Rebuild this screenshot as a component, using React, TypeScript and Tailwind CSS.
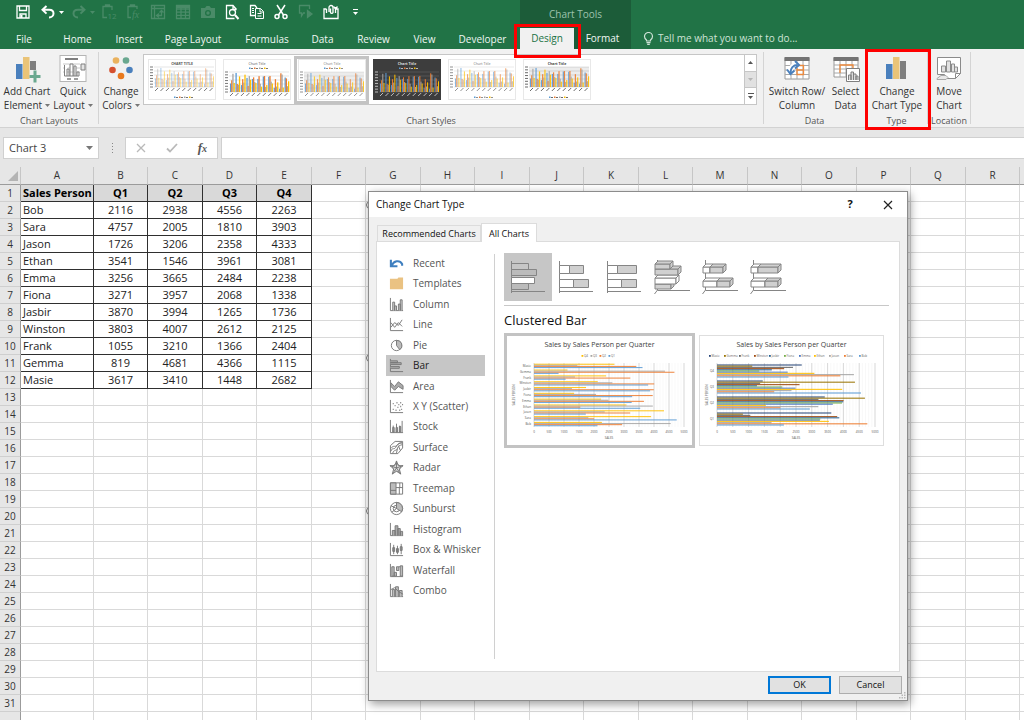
import React from "react";
import clsx from "clsx";

const PEOPLE: [string, number, number, number, number][] = [
  ["Bob", 2116, 2938, 4556, 2263],
  ["Sara", 4757, 2005, 1810, 3903],
  ["Jason", 1726, 3206, 2358, 4333],
  ["Ethan", 3541, 1546, 3961, 3081],
  ["Emma", 3256, 3665, 2484, 2238],
  ["Fiona", 3271, 3957, 2068, 1338],
  ["Jasbir", 3870, 3994, 1265, 1736],
  ["Winston", 3803, 4007, 2612, 2125],
  ["Frank", 1055, 3210, 1366, 2404],
  ["Gemma", 819, 4681, 4366, 1115],
  ["Masie", 3617, 3410, 1448, 2682],
];
const QUARTERS = ["Q1", "Q2", "Q3", "Q4"];
const QUARTER_COLORS = ["#5b9bd5", "#ed7d31", "#a5a5a5", "#ffc000"];
const PERSON_COLORS = [
  "#5b9bd5", "#ed7d31", "#a5a5a5", "#ffc000", "#4472c4", "#70ad47",
  "#255e91", "#9e480e", "#636363", "#997300", "#264478",
];
const COLUMNS = [..."ABCDEFGHIJKLMNOPQR".split(""), ""];
const ROW_COUNT = 31;
const UI = "font-['Open_Sans','Noto_Sans',sans-serif]";

/* ---------- quick access toolbar icons ---------- */

function QatIcon({ name }: { name: string }) {
  const common = { width: 16, height: 16, viewBox: "0 0 16 16", fill: "none", stroke: "currentColor", strokeWidth: 1.3 };
  switch (name) {
    case "Save":
      return (
        <svg {...common}>
          <path d="M2 2h12v12H2z" />
          <path d="M4.5 2v4.5h7V2M5 14v-4h6v4" />
          <path d="M6.5 11v3" strokeWidth="2" />
        </svg>
      );
    case "Undo":
      return (
        <svg {...common} strokeWidth={2}>
          <path d="M6.5 2 2.5 5.8l4 3.8M3 5.8h6.2c2.600 0 4.300 1.600 4.300 3.700S11.500 13.500 9 13.500" />
        </svg>
      );
    case "Redo":
      return (
        <svg {...common} strokeWidth={2}>
          <path d="m9.500 2 4 3.800-4 3.800M13 5.800H6.800c-2.600 0-4.300 1.600-4.300 3.700s2 4 4.500 4" />
        </svg>
      );
    case "Paste Values":
      return (
        <svg {...common}>
          <path d="M6 13.500H2v-11h9V6M4.500 2.500V1h4v1.500" />
          <text x="6.500" y="15" fontSize="8" stroke="none" fill="currentColor" fontFamily="Open Sans">12</text>
        </svg>
      );
    case "Paste Formulas":
      return (
        <svg {...common}>
          <path d="M5 13.500H2v-11h9V5M4.500 2.500V1h4v1.500" />
          <text x="6" y="14" fontSize="10" fontStyle="italic" stroke="none" fill="currentColor" fontFamily="Liberation Serif">fx</text>
        </svg>
      );
    case "Transpose":
      return (
        <svg {...common}>
          <path d="M1.500 1.500h13v13h-13zM1.500 4.500h13M4.500 1.500v13" />
          <path d="M7 11.500h4.500V7M9 9.500l-2.500 2 2.500 2M9.500 8.500l2-2 2 2" />
        </svg>
      );
    case "Table":
      return (
        <svg {...common}>
          <path d="M1.500 1.500h13v13h-13zM1.500 5h13M1.500 8.200h13M1.500 11.400h13M6 1.500v13M10.500 1.500v13" />
          <path d="M1.500 3h13" strokeWidth="2" />
        </svg>
      );
    case "Camera":
      return (
        <svg {...common}>
          <path d="M1 4h4l1.500-2h3L11 4h4v10H1zM8 6a3 3 0 1 0 0 6 3 3 0 0 0 0-6z" fill="currentColor" fillRule="evenodd" stroke="none" />
          <circle cx="8" cy="9" r="1.700" fill="currentColor" stroke="none" />
        </svg>
      );
    case "Print Preview":
      return (
        <svg {...common}>
          <path d="M12.500 5.500 9 1.500H2.500v13h8M9 1.500v4h3.500" />
          <circle cx="8.500" cy="8.500" r="3" />
          <path d="m11 11 3.500 4" strokeWidth="2" />
        </svg>
      );
    case "Copy":
      return (
        <svg {...common}>
          <path d="M6 11.500H1.500v-10H6L8 4" />
          <path d="M6.500 4.500h5l3 3v7h-8zM11 4.500v3.500h3.500M8.500 9.500h4M8.500 12h4M3 4.500h2M3 6.500h2M3 8.500h2" strokeWidth="1" />
        </svg>
      );
    case "Cut":
      return (
        <svg {...common} strokeWidth={1.500}>
          <path d="M4 1 10.500 11M12 1 5.500 11" />
          <circle cx="4" cy="12.500" r="2" />
          <circle cx="12" cy="12.500" r="2" />
        </svg>
      );
    case "Comment":
      return (
        <svg {...common}>
          <path d="M7 9H5.500L3.500 12V9H1.500V1.500h10V5" />
          <path d="M9.500 6.500v7l4.500-3.500z" fill="currentColor" />
        </svg>
      );
    default:
      return (
        <svg {...common}>
          <path d="M3.500 5H1v9.500h14V5h-2.500M3.500 5v4M12.500 3v6M10.500 2.500l2 2.500 2-2.500" />
          <path d="M6 8V3.500a2 2 0 0 1 4 0v5a1.300 1.300 0 0 1-2.500 0V4.500" />
        </svg>
      );
  }
}

function Caret({ className }: { className?: string }) {
  return (
    <svg width="5" height="3" viewBox="0 0 5 3" className={clsx("inline-block shrink-0", className)}>
      <path d="M0 0h5L2.500 3z" fill="currentColor" />
    </svg>
  );
}

function QatButton({ name, dim, wide }: { name: string; dim?: boolean; wide?: boolean }) {
  return (
    <button
      aria-label={name}
      className={clsx("flex h-6 items-center justify-center", wide ? "w-4" : "min-w-0 flex-1", dim ? "text-[#4a8b68]" : "text-white")}
    >
      <QatIcon name={name} />
    </button>
  );
}

const TABS: [string, string][] = [
  ["File", "w-12"],
  ["Home", "w-[59px]"],
  ["Insert", "w-[44px]"],
  ["Page Layout", "w-[84px]"],
  ["Formulas", "w-[64px]"],
  ["Data", "w-[47px]"],
  ["Review", "w-[55px]"],
  ["View", "w-[47px]"],
  ["Developer", "w-[69px]"],
];

function Header() {
  return (
    <header className="flex h-[49px] shrink-0 bg-[#217346] text-[10px] text-[#f0f7f3]">
      <div className="flex w-[520px] shrink-0 flex-col justify-between">
        <div className="flex h-6 items-center pl-[15px]">
          <QatButton name="Save" wide />
          <span className="w-[9px]" />
          <QatButton name="Undo" wide />
          <Caret className="ml-[3px] text-white" />
          <span className="w-[7px]" />
          <QatButton name="Redo" dim wide />
          <Caret className="ml-[3px] text-[#4a8b68]" />
          <div className="ml-[2px] flex w-[246px]">
            <QatButton name="Paste Values" dim />
            <QatButton name="Paste Formulas" dim />
            <QatButton name="Transpose" dim />
            <QatButton name="Table" dim />
            <QatButton name="Camera" dim />
            <QatButton name="Print Preview" />
            <QatButton name="Copy" />
            <QatButton name="Cut" />
            <QatButton name="Comment" dim />
            <QatButton name="Attach" />
          </div>
          <button aria-label="Customize toolbar" className="ml-[10px] flex flex-col items-center gap-[2px] text-white">
            <span className="h-px w-[5px] bg-white" />
            <Caret />
          </button>
        </div>
        <nav className="flex h-[22px]">
          {TABS.map(([label, w]) => (
            <button key={label} className={clsx("shrink-0 whitespace-nowrap text-center leading-6", w)}>
              {label}
            </button>
          ))}
        </nav>
      </div>
      <div className="flex w-[111px] shrink-0 flex-col justify-between bg-[#1c5c39]">
        <div className="pt-[6px] text-center leading-4 text-[#9dc3ae]">Chart Tools</div>
        <div className="flex h-[21px]">
          <div className="relative w-[54px]">
            <button className="h-full w-full bg-[#f1f1f1] leading-[21px] text-[#217346]">Design</button>
            <span className="pointer-events-none absolute -left-[6px] -top-[4px] z-10 h-[34px] w-[67px] border-[3px] border-[#fe0000]" />
          </div>
          <button className="flex-1 leading-[21px] text-[#f0f7f3]">Format</button>
        </div>
      </div>
      <div className="flex flex-1 items-end pl-[12px]">
        <button className="flex h-[21px] items-center gap-[4px] text-[#cfe3d7]">
          <svg width="11" height="13" viewBox="0 0 11 13" fill="none" stroke="currentColor" strokeWidth="1.200">
            <path d="M3.500 9V8C2.300 7 1.500 6 1.500 4.500a4 4 0 0 1 8 0C9.500 6 8.700 7 7.500 8v1zM3.500 10.700h4M4.200 12.400h2.600" />
          </svg>
          Tell me what you want to do...
        </button>
      </div>
    </header>
  );
}

/* ---------- ribbon ---------- */

function BarsIcon({ plus }: { plus?: boolean }) {
  return (
    <svg width="28" height="28" viewBox="0 0 28 28">
      <path fill="#4a80bd" d="M3 9h6.500v15H3z" />
      <path fill="#eac478" d="M10 2h6.500v22H10z" />
      <path fill="#7f7f7f" d="M17 6h6v18h-6z" />
      {plus && (
        <>
          <path fill="#f1f1f1" d="M17 15h12v12H17z" />
          <path fill="#7f7f7f" d="M17 6h6v9h-6z" />
          <path fill="#6aa890" d="M20.500 15.500h3V20h4v3h-4v4.500h-3V23h-4v-3h4z" />
        </>
      )}
    </svg>
  );
}

function QuickLayoutIcon() {
  return (
    <svg width="28" height="28" viewBox="0 0 28 28" fill="none" stroke="#7f7f7f">
      <rect x="1" y=".5" width="26" height="26" fill="#fff" stroke="#b5b5b5" />
      <path d="M6 4h13" strokeWidth="2" />
      <path d="M4 9h17M4 13h17M4 17h17" stroke="#c8c8c8" />
      <path d="M5.500 10v11H20M8 21v-7h2v7M11 21V9h3v12M15 21V11h2v10M18 21v-4h2v4" fill="#fff" />
      <path d="M22 9h4v6h-4z" fill="#e4e4e4" />
      <path d="M8 24h4M15 24h4" strokeWidth="1.500" />
    </svg>
  );
}

function ColorsIcon() {
  return (
    <svg width="28" height="28" viewBox="0 0 28 28">
      <circle cx="9" cy="5.500" r="3.300" fill="#eab25e" />
      <circle cx="19" cy="5.500" r="3.300" fill="#6aa890" />
      <circle cx="5.500" cy="15" r="3.300" fill="#d5502f" />
      <circle cx="22.500" cy="15" r="3.300" fill="#4a80bd" />
      <circle cx="14" cy="21" r="3.300" fill="#e8791e" />
    </svg>
  );
}

function SwitchIcon() {
  return (
    <svg width="28" height="28" viewBox="0 0 28 28" fill="none">
      <path d="M2 3h24v21H2z" fill="#fff" stroke="#9a9a9a" />
      <path d="M1.500 2h25v4h-25z" fill="#737373" />
      <path d="M2 10.500h24M2 15h24M2 19.500h24M8 6v18M14 6v18M20 6v18" stroke="#a8a8a8" />
      <path d="M14 10.500h6.500v9H14zM14 15h6.500" stroke="#ee8a3c" strokeWidth="1.300" />
      <path d="M7 18c0-5 3-8 8-8" stroke="#fff" strokeWidth="5" />
      <path d="M7.500 18c0-5 3-8 7-8" stroke="#4a80bd" strokeWidth="2.200" />
      <path d="M4 14.500 7.500 19l4-3.500M12 6l4 4-4 3.500" stroke="#4a80bd" strokeWidth="2" />
    </svg>
  );
}

function SelectDataIcon() {
  return (
    <svg width="28" height="28" viewBox="0 0 28 28" fill="none">
      <path d="M2 3h24v19H2z" fill="#fff" stroke="#9a9a9a" />
      <path d="M1.500 2h25v4h-25z" fill="#737373" />
      <path d="M2 10h24M2 14h24M2 18h24M8 6v16M14 6v16M20 6v16" stroke="#a8a8a8" />
      <path d="M8 18v-8h13v4" stroke="#ee8a3c" strokeWidth="1.300" />
      <path d="M14.500 13.500h13v13h-13z" fill="#fff" stroke="#7f7f7f" />
      <path d="M16.500 25v-5h2.500v5M19 25v-8h2.500v8M21.500 25v-6H24v6M24 25v-4h2v4" fill="#ddd" stroke="#7f7f7f" />
    </svg>
  );
}

function MoveChartIcon() {
  return (
    <svg width="28" height="28" viewBox="0 0 28 28" fill="none" stroke="#8b8b8b">
      <path d="M2.500 2.500h23v16l-5 5h-9l-2-4h-7z" fill="#fff" />
      <path d="M25.500 18.500h-5v5z" fill="#fff" />
      <path d="M6.500 17v-6h4v6zM11.500 17V6h4v11zM16.500 17V9h3v8zM19.500 17v-5h3v5z" fill="#e2e2e2" />
      <path d="M2 24.500h9l2-2-2-2H6l-4 3z" fill="#e8e8e8" stroke="#a8a8a8" />
    </svg>
  );
}

function RibbonButton({ icon, lines, caret, className }: { icon: React.ReactNode; lines: [string, string]; caret?: boolean; className: string }) {
  return (
    <button className={clsx("flex shrink-0 flex-col items-center text-[10px] leading-[14px] text-[#333]", className)}>
      <span className="mb-px">{icon}</span>
      <span className="whitespace-nowrap">{lines[0]}</span>
      <span className="flex items-center gap-[3px] whitespace-nowrap">
        {lines[1]}
        {caret && <Caret className="text-[#777]" />}
      </span>
    </button>
  );
}

function Group({ label, className, children }: { label: string; className?: string; children: React.ReactNode }) {
  return (
    <section className={clsx("flex shrink-0 flex-col justify-between", className)}>
      <div className="flex pt-[6px]">{children}</div>
      <div className="whitespace-nowrap text-center text-[9px] leading-3 text-[#555]">{label}</div>
    </section>
  );
}

function Divider() {
  return <div className="my-[3px] w-px shrink-0 bg-[#d4d4d4]" />;
}

interface ThumbStyle {
  bg: string;
  plot?: string;
  legend: "top" | "bottom";
  opacity: number;
  ink: string;
  bold?: boolean;
  caps?: boolean;
  bar: number;
}

const THUMBS: ThumbStyle[] = [
  { bg: "#fff", legend: "bottom", opacity: 0.55, ink: "#555", caps: true, bold: true, bar: 0.9 },
  { bg: "#fff", legend: "top", opacity: 1, ink: "#555", bar: 1.3 },
  { bg: "#fff", plot: "#ececec", legend: "top", opacity: 0.8, ink: "#777", bar: 1 },
  { bg: "#3d3d3d", legend: "top", opacity: 1, ink: "#ddd", bold: true, bar: 1 },
  { bg: "#fff", legend: "bottom", opacity: 0.7, ink: "#777", bar: 1 },
  { bg: "#fff", plot: "#ececec", legend: "bottom", opacity: 0.9, ink: "#444", bold: true, bar: 1.2 },
];

function ColumnThumb({ s }: { s: ThumbStyle }) {
  const top = s.legend === "top" ? 13 : 8;
  const base = s.legend === "top" ? 33 : 28;
  const span = base - top;
  const slot = 60 / PEOPLE.length;
  return (
    <svg width="68" height="41" viewBox="0 0 68 41" className="block">
      <rect x=".5" y=".5" width="67" height="40" fill={s.bg} stroke={s.bg === "#fff" ? "#e8e8e8" : s.bg} />
      {s.plot && <rect x="6" y={top} width="60" height={span} fill={s.plot} />}
      <text x="34" y="5.500" fontSize="3.500" fontWeight={s.bold ? 700 : 400} textAnchor="middle" fill={s.ink} fontFamily="Open Sans">
        {s.caps ? "CHART TITLE" : "Chart Title"}
      </text>
      {QUARTER_COLORS.map((c, i) => (
        <g key={c}>
          <rect x={26 + i * 5} y={s.legend === "top" ? 8.500 : 37.500} width="1.500" height="1.500" fill={c} />
          <rect x={28 + i * 5} y={s.legend === "top" ? 9 : 38} width="2" height=".8" fill={s.ink} />
        </g>
      ))}
      {Array.from({ length: 6 }, (_, i) => (
        <path key={i} d={`M6 ${top + (span * i) / 5}h60`} stroke={s.ink} strokeOpacity=".3" strokeWidth=".5" />
      ))}
      {Array.from({ length: 8 }, (_, i) => (
        <path key={i} d={`M2 ${top + (span * i) / 7}h3`} stroke={s.ink} strokeOpacity=".8" strokeWidth="1" />
      ))}
      {PEOPLE.map((p, i) =>
        QUARTER_COLORS.map((c, q) => {
          const h = (span * (p[q + 1] as number)) / 5000;
          return <rect key={c + i} x={7 + i * slot + q * 1.150} y={base - h} width={s.bar} height={h} fill={c} opacity={s.opacity} />;
        })
      )}
      {PEOPLE.map((p, i) => (
        <path key={p[0]} d={`M${7 + i * slot} ${base + 4}l3-3`} stroke={s.ink} strokeOpacity=".8" strokeWidth="1" />
      ))}
    </svg>
  );
}

function Ribbon() {
  return (
    <div className="flex h-[79px] shrink-0 border-b border-[#d2d2d2] bg-[#f1f1f1]">
      <Group label="Chart Layouts" className="w-[98px]">
        <RibbonButton className="w-[54px]" icon={<BarsIcon plus />} lines={["Add Chart", "Element"]} caret />
        <RibbonButton className="w-[38px]" icon={<QuickLayoutIcon />} lines={["Quick", "Layout"]} caret />
      </Group>
      <Divider />
      <Group label="Chart Styles" className="min-w-0 flex-1">
        <RibbonButton className="w-[44px]" icon={<ColorsIcon />} lines={["Change", "Colors"]} caret />
        <div className="-mt-px mr-[6px] flex h-[51px] min-w-0 flex-1 border border-[#c6c6c6] bg-white">
          <div className="flex min-w-0 flex-1 items-center overflow-hidden">
            {THUMBS.map((s, i) => (
              <button
                key={i}
                aria-label={`Style ${i + 1}`}
                className={clsx(
                  "flex h-[48px] w-[75px] shrink-0 items-center justify-center",
                  i === 2 && "border-[3px] border-[#c3c3c3]"
                )}
              >
                <ColumnThumb s={s} />
              </button>
            ))}
          </div>
          <div className="flex w-3 shrink-0 flex-col border-l border-[#c6c6c6] text-[#555]">
            <button aria-label="Previous styles" className="flex flex-1 items-center justify-center">
              <Caret className="rotate-180" />
            </button>
            <button aria-label="Next styles" className="flex flex-1 items-center justify-center border-y border-[#c6c6c6] bg-[#e1e1e1] text-[#b5b5b5]">
              <Caret />
            </button>
            <button aria-label="More styles" className="flex flex-1 flex-col items-center justify-center gap-[2px]">
              <span className="h-px w-[6px] bg-[#555]" />
              <Caret />
            </button>
          </div>
        </div>
      </Group>
      <Divider />
      <Group label="Data" className="w-[101px]">
        <RibbonButton className="w-[66px]" icon={<SwitchIcon />} lines={["Switch Row/", "Column"]} />
        <RibbonButton className="w-[31px]" icon={<SelectDataIcon />} lines={["Select", "Data"]} />
      </Group>
      <div className="relative flex">
        <Divider />
        <Group label="Type" className="w-[61px]">
          <RibbonButton className="w-[62px]" icon={<BarsIcon />} lines={["Change", "Chart Type"]} />
        </Group>
        <span className="pointer-events-none absolute left-0 top-0 z-10 h-[81px] w-[66px] border-[3px] border-[#fe0000]" />
      </div>
      <Divider />
      <Group label="Location" className="w-[42px]">
        <RibbonButton className="w-[42px]" icon={<MoveChartIcon />} lines={["Move", "Chart"]} />
      </Group>
      <Divider />
      <div className="w-[53px] shrink-0" />
    </div>
  );
}

/* ---------- formula bar ---------- */

function FormulaBar() {
  return (
    <div className="flex h-[39px] shrink-0 items-start bg-[#e6e6e6] pl-[3px] pt-[9px] text-[11px] text-[#444]">
      <label className="flex h-[22px] w-24 items-center border border-[#d0d0d0] bg-white px-[5px]">
        <input aria-label="Name box" defaultValue="Chart 3" className="w-0 flex-1 bg-transparent outline-none" />
        <svg width="7" height="4" viewBox="0 0 7 4"><path d="M0 0h7L3.500 4z" fill="#777" /></svg>
      </label>
      <div className="flex h-[22px] w-[26px] flex-col items-center justify-center gap-[2px]">
        <span className="size-px bg-[#888]" />
        <span className="size-px bg-[#888]" />
        <span className="size-px bg-[#888]" />
        <span className="size-px bg-[#888]" />
      </div>
      <div className="flex h-[22px] w-[93px] items-center justify-around border border-[#d0d0d0] bg-white text-[#b9b9b9]">
        <button aria-label="Cancel entry">
          <svg width="10" height="10" viewBox="0 0 10 10" stroke="currentColor" strokeWidth="1.300"><path d="m1 1 8 8M9 1 1 9" /></svg>
        </button>
        <button aria-label="Enter">
          <svg width="12" height="10" viewBox="0 0 12 10" stroke="currentColor" strokeWidth="1.800" fill="none"><path d="m1 5.500 3 3L11 1" /></svg>
        </button>
        <button className="font-['Liberation_Serif',serif] text-[13px] font-bold italic leading-4 text-[#555]">
          f<span className="text-[10px]">x</span>
        </button>
      </div>
      <input aria-label="Formula" className="ml-[3px] h-[22px] min-w-0 flex-1 border border-r-0 border-[#d0d0d0] bg-white outline-none" />
    </div>
  );
}

/* ---------- sheet ---------- */

function Sheet() {
  const head = "h-[18px] border-b border-r border-b-[#9b9b9b] border-r-[#c6c6c6] bg-[#e6e6e6] p-0 text-[10px] font-normal leading-[17px] text-[#333]";
  return (
    <table className="w-[calc(100%+51px)] table-fixed border-separate border-spacing-0 bg-white text-[11px] leading-4 text-[#222]">
      <colgroup>
        <col className="w-[21px]" />
        <col className="w-[73px]" />
        {COLUMNS.slice(1).map((_, i) => (
          <col key={i} className={i % 2 ? "w-[55px]" : "w-[54px]"} />
        ))}
      </colgroup>
      <thead>
        <tr>
          <th className={head}>
            <svg width="10" height="10" viewBox="0 0 10 10" className="ml-auto mr-[2px]"><path d="M10 0v10H0z" fill="#b4b4b4" /></svg>
          </th>
          {COLUMNS.map((l, i) => (
            <th key={i} scope="col" className={head}>{l}</th>
          ))}
        </tr>
      </thead>
      <tbody>
        {Array.from({ length: ROW_COUNT + 1 }, (_, r) => {
          const person = r > 0 ? PEOPLE[r - 1] : undefined;
          return (
            <tr key={r} className="h-[17px]">
              <th scope="row" className="border-b border-r border-b-[#cfcfcf] border-r-[#9b9b9b] bg-[#e6e6e6] p-0 text-[10px] font-normal leading-4 text-[#333]">
                {r < ROW_COUNT ? r + 1 : ""}
              </th>
              {COLUMNS.map((_, c) => {
                const used = r <= PEOPLE.length && c < 5;
                const text = !used ? "" : r === 0 ? (c === 0 ? "Sales Person" : QUARTERS[c - 1]) : person?.[c];
                return (
                  <td
                    key={c}
                    className={clsx(
                      "whitespace-nowrap border-b border-r p-0",
                      used ? "border-[#2f2f2f]" : "border-[#d9d9d9]",
                      r === 0 && used && "bg-[#d9d9d9] font-bold text-black",
                      c === 0 ? "pl-[2px] text-left" : "text-center"
                    )}
                  >
                    {text}
                  </td>
                );
              })}
            </tr>
          );
        })}
      </tbody>
    </table>
  );
}

/* ---------- dialog ---------- */

const AXIS = "M1.500 1v13.500H15";

function TypeIcon({ name }: { name: string }) {
  const g = { width: 15, height: 15, viewBox: "0 0 16 16", fill: "none", stroke: "#777", strokeWidth: 1, className: "shrink-0" };
  switch (name) {
    case "Recent":
      return <svg {...g} stroke="#3f7fbf" strokeWidth="2.200"><path d="M2 4v7h7M3 10c2-4.500 8-6.500 11-1.500v2" /></svg>;
    case "Templates":
      return <svg {...g} stroke="none"><path fill="#eac282" d="M1 3h8l1-1.500h5V14H1z" /></svg>;
    case "Column":
      return <svg {...g}><path d={AXIS} /><path d="M4 14.500v-9h2v9M6 14.500v-5h2v5M10 14.500v-7h2v7M12 14.500V3h2v11.500" fill="#ccc" /></svg>;
    case "Line":
      return <svg {...g}><path d={AXIS} /><path d="m2 11 4-5 4 3 4-6M2 6l4 5 4-5 4 4" /></svg>;
    case "Pie":
      return <svg {...g}><circle cx="8" cy="8" r="5.500" /><path d="M8 2.500V8l3.500 4.500A5.500 5.500 0 0 0 8 2.500z" fill="#bbb" /></svg>;
    case "Bar":
      return <svg {...g}><path d={AXIS} /><path d="M1.500 3H9v2H1.500M1.500 5H13v2H1.500M1.500 9H11v2H1.500" fill="#aaa" /></svg>;
    case "Area":
      return <svg {...g}><path d={AXIS} /><path d="m2 4 4 4 4-5 5 4v4l-5-3-4 4-4-4z" fill="#aaa" /></svg>;
    case "X Y (Scatter)":
      return <svg {...g}><path d={AXIS} /><path d="M4 11h1M6 7h1M9 9h1M12 4h1M8 4h1M12 8h1M4 5h1M7 12h1M11 12h1M14 6h1M13 11h1M10 6h1" strokeWidth="1.400" /></svg>;
    case "Stock":
      return <svg {...g}><path d={AXIS} /><path d="M4.500 7v7M8 5v9M11.500 7v7M14 2v12" /><path d="M4 9h1.500v5H4zM7.500 9H9v5H7.500zM11 8h1.500v6H11z" fill="#999" /></svg>;
    case "Surface":
      return <svg {...g}><path d="M1.500 13V6l5-4.500h8v7l-5 6h-8z" /><path d="M2 12c2-5 3-1 5-4s3-5 7-5M2 9c3-4 4-1 6-3s3-3 6-3M4 14c1-4 4-2 5-5s2-3 5-4M8 14l1-5M12 11l-2-5" /></svg>;
    case "Radar":
      return (
        <svg {...g}>
          <path d="m8 3.500 4.500 3.500-2 5.500-5-1L3.500 7z" fill="#ddd" stroke="#999" />
          <path d="M8 1v7.500M1 6l7 2.500L15 6M3.500 15 8 8.500l4.500 6.500M8 1l2 5 5 0-4 3.500 1.500 5.500L8 12l-4.500 3L5 9.500 1 6h5z" />
        </svg>
      );
    case "Treemap":
      return <svg {...g}><path d="M1.500 2h13v12h-13z" /><path d="M1.500 2h6v12h-6z" fill="#bbb" /><path d="M7.500 7h7M11 7v7M1.500 10h6M11.500 2v5" /></svg>;
    case "Sunburst":
      return <svg {...g}><circle cx="8" cy="8" r="6.500" /><circle cx="8" cy="8" r="3.500" /><path d="M8 1.500V8l5.500 3.500A6.500 6.500 0 0 0 8 1.500z" fill="#bbb" /><path d="m8 8-5 4M8 8 2 5" /></svg>;
    case "Histogram":
      return <svg {...g}><path d={AXIS} /><path d="M3.500 14.500V9h3v5.500M6.500 14.500V4h3v10.500M9.500 14.500V7h2.500v7.500M12 14.500V10h2.500v4.500" fill="#aaa" /></svg>;
    case "Box & Whisker":
      return <svg {...g}><path d={AXIS} /><path d="M5 3v10M9 4v9M13 2v11M4 6h2v4H4zM8 7h2v4H8zM12 5h2v4h-2z" fill="#aaa" /></svg>;
    case "Waterfall":
      return <svg {...g}><path d={AXIS} /><path d="M3 4h2.500v10H3zM5.500 10H8v4H5.500zM8 4h2.500v4H8zM12 3h2.500v11H12zM10.500 4H12" fill="#bbb" /></svg>;
    default:
      return <svg {...g}><path d={AXIS} /><path d="M3.500 14.500V7H6v7.500M7 14.500V4h3v10.500M11 14.500V8h3v6.500" fill="#bbb" /><path d="m2 7 4-2 4 4 5 3" /></svg>;
  }
}

const TYPES = [
  "Recent", "Templates", "Column", "Line", "Pie", "Bar", "Area", "X Y (Scatter)", "Stock", "Surface",
  "Radar", "Treemap", "Sunburst", "Histogram", "Box & Whisker", "Waterfall", "Combo",
];

function Box3d({ x, y, w, h = 6, fill }: { x: number; y: number; w: number; h?: number; fill: string }) {
  return (
    <g fill={fill}>
      <path d={`M${x} ${y}h${w}v${h}h-${w}z`} />
      <path d={`M${x} ${y}l3-3h${w}l-3 3zM${x + w} ${y}l3-3v${h}l-3 3z`} />
    </g>
  );
}

const SUBTYPES = ["Clustered Bar", "Stacked Bar", "100% Stacked Bar", "3-D Clustered Bar", "3-D Stacked Bar", "3-D 100% Stacked Bar"];

function SubtypeIcon({ index }: { index: number }) {
  const lite = "#fff";
  const dark = "#d0d0d0";
  return (
    <svg width="38" height="38" viewBox="0 0 38 38" fill="none" stroke="#858585">
      {index < 3 ? <path d="M2.500 3v32M2 33.500h34" /> : <path d="M4.500 2v30l-3 4M4.500 32.500H37" />}
      {index === 0 && (
        <>
          <path d="M2.500 5.500h17v6h-17z" />
          <path d="M2.500 11.500h25v6h-25z" fill="#bbb" />
          <path d="M2.500 19.500h23v6h-23z" fill={lite} />
          <path d="M2.500 25.500h17v6h-17z" fill="#bbb" />
        </>
      )}
      {index === 1 && (
        <>
          <path d="M2.500 7.500h10v8h-10zM2.500 21.500h14v8h-14z" fill={lite} />
          <path d="M12.500 7.500h14v8h-14zM16.500 21.500h15v8h-15z" fill={dark} />
        </>
      )}
      {index === 2 && (
        <>
          <path d="M2.500 7.500h10v8h-10zM2.500 21.500h14v8h-14z" fill={lite} />
          <path d="M12.500 7.500h19v8h-19zM16.500 21.500h15v8h-15z" fill={dark} />
        </>
      )}
      {index === 3 && (
        <>
          <Box3d x={2} y={26} w={16} h={5} fill={dark} />
          <Box3d x={2} y={20} w={21} h={6} fill={lite} />
          <Box3d x={2} y={11} w={23} h={6} fill={dark} />
          <Box3d x={2} y={6} w={15} h={5} fill={dark} />
        </>
      )}
      {index > 3 && (
        <>
          <Box3d x={2} y={23} w={14} fill={lite} />
          <Box3d x={16} y={23} w={13} fill={dark} />
          <Box3d x={2} y={9} w={7} fill={lite} />
          <Box3d x={9} y={9} w={index === 4 ? 13 : 20} fill={dark} />
        </>
      )}
    </svg>
  );
}

interface Series {
  name: string;
  color: string;
}

function BarPreview({ width, plotX, plotW, groups, series, values, barH, gap, legendGap }: {
  width: number;
  plotX: number;
  plotW: number;
  groups: string[];
  series: Series[];
  values: (g: number, s: number) => number;
  barH: number;
  gap: number;
  legendGap: number;
}) {
  const top = 27;
  const height = 64;
  const slot = height / groups.length;
  const legendX = width / 2 - (series.length * legendGap) / 2;
  return (
    <svg width={width} height="109" viewBox={`0 0 ${width} 109`} className="block" fontFamily="Open Sans">
      <rect width={width} height="109" fill="#fff" />
      <text x={width / 2} y="11" fontSize="7" textAnchor="middle" fill="#404040">Sales by Sales Person per Quarter</text>
      {series.map((s, i) => (
        <g key={s.name}>
          <rect x={legendX + i * legendGap} y="19" width="1.800" height="1.800" fill={s.color} />
          <text x={legendX + i * legendGap + 2.500} y="21.200" fontSize="3" fill="#666">{s.name}</text>
        </g>
      ))}
      {Array.from({ length: 51 }, (_, i) => (
        <path
          key={i}
          d={`M${plotX + (plotW * i) / 50} ${top}v${height}`}
          stroke={i % 5 ? "#f0f0f0" : "#d2d2d2"}
          strokeWidth={i % 5 ? 0.500 : 0.900}
        />
      ))}
      {groups.map((name, g) => (
        <g key={name}>
          <text x={plotX - 3} y={top + g * slot + slot / 2 + 1} fontSize="3" textAnchor="end" fill="#555">{name}</text>
          {series.map((s, i) => (
            <rect
              key={s.name}
              x={plotX}
              y={top + g * slot + gap + i * barH}
              width={(plotW * values(g, i)) / 5000}
              height={barH}
              fill={s.color}
              opacity=".85"
            />
          ))}
        </g>
      ))}
      {Array.from({ length: 11 }, (_, i) => (
        <text key={i} x={plotX + (plotW * i) / 10} y="97" fontSize="3" textAnchor="middle" fill="#555">{i * 500}</text>
      ))}
      <text x={plotX + plotW / 2} y="103" fontSize="3" textAnchor="middle" fill="#555">SALES</text>
      <text x="8" y="59" fontSize="3" textAnchor="middle" fill="#555" transform="rotate(-90 8 59)">SALES PERSON</text>
    </svg>
  );
}

const peopleDown = PEOPLE.map((p, i) => ({ name: p[0], color: PERSON_COLORS[i], row: p })).reverse();
const quartersDown = QUARTERS.map((name, i) => ({ name, color: QUARTER_COLORS[i] })).reverse();

function Dialog() {
  return (
    <div
      role="dialog"
      aria-label="Change Chart Type"
      className="absolute left-[368px] top-[191px] z-20 flex h-[510px] w-[540px] flex-col border border-[#8c8c8c] bg-[#f0f0f0] text-[#111] shadow-[2px_3px_9px_rgba(0,0,0,0.4)]"
    >
      <div className="flex h-[25px] shrink-0 items-center bg-white pl-[7px] pr-[14px] text-[10px]">
        <h2 className="flex-1">Change Chart Type</h2>
        <button className="w-5 text-[11px] font-bold">?</button>
        <button aria-label="Close" className="ml-[23px]">
          <svg width="10" height="10" viewBox="0 0 10 10" stroke="#222" strokeWidth="1.200"><path d="m1 1 8 8M9 1 1 9" /></svg>
        </button>
      </div>
      <div className="flex min-h-0 flex-1 flex-col px-[7px] pt-[5px]">
        <div role="tablist" className="flex h-[19px] shrink-0 items-end pl-px text-[9px]">
          <button role="tab" className="h-[16px] w-[104px] whitespace-nowrap border border-b-0 border-[#dcdcdc] leading-[15px]">
            Recommended Charts
          </button>
          <button role="tab" aria-selected="true" className="z-10 -mb-px h-[19px] w-[56px] whitespace-nowrap border border-b-0 border-[#dcdcdc] bg-white leading-[17px]">
            All Charts
          </button>
        </div>
        <div className="flex h-[431px] shrink-0 border border-[#dcdcdc] bg-white">
          <ul className="ml-[9px] mt-[11px] flex h-[348px] w-[99px] flex-col text-[10px] text-[#555]">
            {TYPES.map((t) => (
              <li key={t} className="flex min-h-0 flex-1">
                <button className={clsx("flex w-full items-center gap-[9px] whitespace-nowrap pl-[3px]", t === "Bar" && "bg-[#c6c6c6] text-[#222]")}>
                  <TypeIcon name={t} />
                  {t}
                </button>
              </li>
            ))}
          </ul>
          <div className="my-3 ml-[9px] w-px bg-[#d0d0d0]" />
          <div className="ml-[9px] mr-[10px] mt-[11px] flex min-w-0 flex-1 flex-col">
            <div className="flex h-[53px] border-b border-[#c8c8c8]">
              {SUBTYPES.map((s, i) => (
                <button key={s} aria-label={s} className={clsx("flex size-12 items-center justify-center", i === 0 && "bg-[#c6c6c6]")}>
                  <SubtypeIcon index={i} />
                </button>
              ))}
            </div>
            <h3 className="mt-1 text-[13px] leading-5">Clustered Bar</h3>
            <div className="mt-[3px] flex items-center gap-[4px]">
              <button aria-label="Preview by person" className="border-[3px] border-[#c3c3c3]">
                <BarPreview
                  width={185} plotX={27} plotW={150} barH={1.100} gap={0.700} legendGap={9}
                  groups={peopleDown.map((p) => p.name)}
                  series={quartersDown}
                  values={(g, s) => peopleDown[g].row[4 - s] as number}
                />
              </button>
              <button aria-label="Preview by quarter" className="border border-[#dedede]">
                <BarPreview
                  width={183} plotX={17} plotW={158} barH={1.200} gap={1.400} legendGap={15}
                  groups={quartersDown.map((q) => q.name)}
                  series={peopleDown}
                  values={(g, s) => peopleDown[s].row[4 - g] as number}
                />
              </button>
            </div>
          </div>
        </div>
      </div>
      <div className="flex h-[24px] shrink-0 items-start justify-end gap-[8px] pr-[5px] text-[9px]">
        <button className="h-[18px] w-[63px] border-2 border-[#0078d7] bg-[#e1e1e1] leading-[14px]">OK</button>
        <button className="h-[18px] w-[63px] border border-[#adadad] bg-[#e1e1e1] leading-4">Cancel</button>
      </div>
      <svg width="7" height="7" viewBox="0 0 7 7" className="absolute bottom-px right-px" fill="#b8b8b8">
        <path d="M5 0h1.500v1.500H5zM2.500 2.500H4V4H2.500zM5 2.500h1.500V4H5zM0 5h1.500v1.500H0zM2.500 5H4v1.500H2.500zM5 5h1.500v1.500H5z" />
      </svg>
    </div>
  );
}

export default function App() {
  return (
    <div className={clsx("relative flex h-screen flex-col overflow-hidden bg-white", UI)}>
      <Header />
      <Ribbon />
      <FormulaBar />
      <main className="min-h-0 flex-1 overflow-hidden">
        <Sheet />
      </main>
      <span className="absolute left-[366px] top-[201px] size-2 rounded-full border border-[#777] bg-white" />
      <span className="absolute left-[366px] top-[354px] size-2 rounded-full border border-[#777] bg-white" />
      <span className="absolute left-[366px] top-[507px] size-2 rounded-full border border-[#777] bg-white" />
      <Dialog />
    </div>
  );
}
